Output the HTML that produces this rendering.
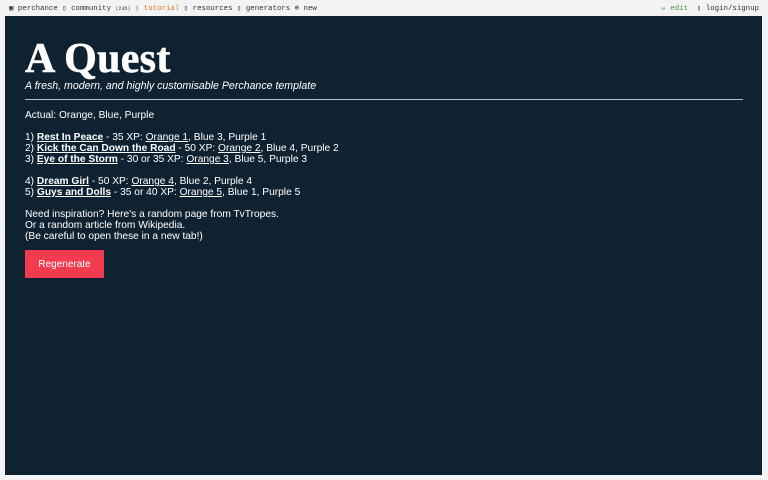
<!DOCTYPE html>
<html><head><style>
body{margin:0;width:768px;height:480px;background:#f3f3f3;overflow:hidden;position:relative;font-family:"Liberation Sans",sans-serif}
.top{position:absolute;top:3px;left:9px;font:7.4px "Liberation Mono",monospace;color:#333;white-space:pre}
.top2{position:absolute;top:3px;right:9px;font:7.4px "Liberation Mono",monospace;color:#333;white-space:pre}
.panel{position:absolute;left:5px;top:16px;width:757px;height:459px;background:#0f2231;color:#fff}
h1{position:absolute;left:20px;top:19px;margin:0;font:bold 42px "Liberation Serif",serif;letter-spacing:0.3px;-webkit-text-stroke:0.6px #fff}
.sub{position:absolute;left:20px;top:64px;font-style:italic;font-size:10.6px}
.hr{position:absolute;left:20px;top:83px;width:718px;height:1px;background:#b8c0c6}
.c{position:absolute;left:20px;top:94px;font-size:10.2px;line-height:11px}
.c p{margin:0 0 11px}
u{text-decoration:underline}
b{font-weight:bold}
.btn{position:absolute;left:20px;top:234px;width:79px;height:28px;background:#f23a50;font-size:10px;line-height:30px;text-align:center}
</style></head><body>
<div class="top">▣ perchance ▯ community <span style="font-size:5px">(23h)</span> <span style="color:#e07b2c">▯ tutorial</span> ▯ resources ▯ generators ⊕ new</div>
<div class="top2"><span style="color:#3a9a3a">✏ edit</span>  ▯ login/signup</div>
<div class="panel">
<h1>A Quest</h1>
<div class="sub">A fresh, modern, and highly customisable Perchance template</div>
<div class="hr"></div>
<div class="c">
<p>Actual: Orange, Blue, Purple</p>
<p>1) <b><u>Rest In Peace</u></b> - 35 XP: <u>Orange 1</u>, Blue 3, Purple 1<br>2) <b><u>Kick the Can Down the Road</u></b> - 50 XP: <u>Orange 2</u>, Blue 4, Purple 2<br>3) <b><u>Eye of the Storm</u></b> - 30 or 35 XP: <u>Orange 3</u>, Blue 5, Purple 3</p>
<p>4) <b><u>Dream Girl</u></b> - 50 XP: <u>Orange 4</u>, Blue 2, Purple 4<br>5) <b><u>Guys and Dolls</u></b> - 35 or 40 XP: <u>Orange 5</u>, Blue 1, Purple 5</p>
<p>Need inspiration? Here's a random page from TvTropes.<br>Or a random article from Wikipedia.<br>(Be careful to open these in a new tab!)</p>
</div>
<div class="btn">Regenerate</div>
</div>
</body></html>
